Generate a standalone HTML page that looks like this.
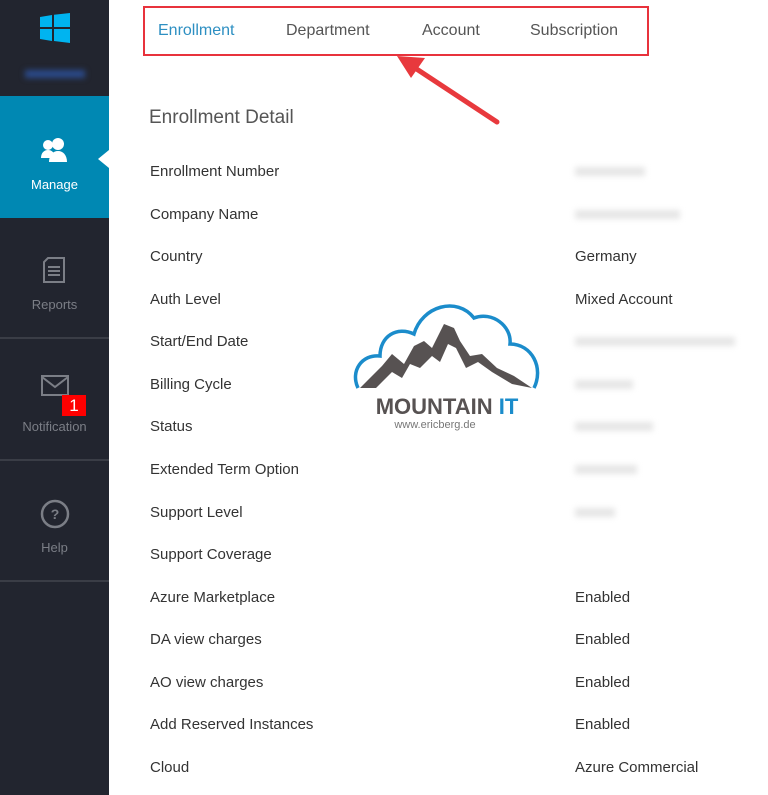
<!DOCTYPE html>
<html><head><meta charset="utf-8"><style>
body{margin:0;width:768px;height:795px;background:#fff;font-family:"Liberation Sans",sans-serif;position:relative;overflow:hidden}
.sb{position:absolute;left:0;top:0;width:109px;height:795px;background:#22252f}
.item{position:absolute;left:0;width:109px;text-align:center;font-size:13px;color:#7b7e86}
.div{position:absolute;left:0;width:109px;height:2px;background:#3a3d46}
.lbl{position:absolute;left:150px;font-size:15px;color:#333}
.val{position:absolute;left:575px;font-size:15px;color:#333}
.blur{position:absolute;left:575px;height:9px;background:#e6e6e6;filter:blur(3px)}
.tab{position:absolute;top:22px;font-size:16px;color:#555}
</style></head><body>
<div class="sb">
 <svg style="position:absolute;left:40px;top:13px" width="30" height="30" viewBox="0 0 30 30"><path fill="#00b4f0" d="M0 4l12-2v12H0zM14 1.7L30 0v14H14zM0 16h12v12L0 26zM14 16h16v14l-16-2z"/></svg>
 <div style="position:absolute;left:25px;top:70px;width:60px;height:8px;background:#2b4a8a;filter:blur(3px)"></div>
 <div style="position:absolute;top:96px;left:0;width:109px;height:122px;background:#0088b3"></div>
 <div style="position:absolute;left:98px;top:150px;width:0;height:0;border-top:9px solid transparent;border-bottom:9px solid transparent;border-right:11px solid #fff"></div>
 <svg style="position:absolute;left:40px;top:137px" width="28" height="26" viewBox="0 0 28 26"><circle cx="8" cy="8" r="5" fill="#fff"/><circle cx="18" cy="7" r="6" fill="#fff"/><path d="M1 21c0-5 3-8 7-8s7 3 7 8z" fill="#fff"/><path d="M9 25c0-7 4-11 9-11s9 4 9 11z" fill="#fff"/></svg>
 <div class="item" style="top:177px;color:#fff">Manage</div>
 <svg style="position:absolute;left:42px;top:256px" width="24" height="28" viewBox="0 0 24 28"><path d="M6 2h16v24H2V6z" fill="none" stroke="#7b7e86" stroke-width="2"/><path d="M6 11h12M6 15h12M6 19h12" stroke="#7b7e86" stroke-width="2"/></svg>
 <div class="item" style="top:297px">Reports</div>
 <div class="div" style="top:337px"></div>
 <svg style="position:absolute;left:41px;top:375px" width="28" height="22" viewBox="0 0 28 22"><rect x="1" y="1" width="26" height="19" fill="none" stroke="#7b7e86" stroke-width="2"/><path d="M1 2l13 10 13-10" fill="none" stroke="#7b7e86" stroke-width="2"/></svg>
 <div style="position:absolute;left:62px;top:395px;width:24px;height:21px;background:#f00;color:#fff;font-size:17px;text-align:center;line-height:21px">1</div>
 <div class="item" style="top:419px">Notification</div>
 <div class="div" style="top:459px"></div>
 <svg style="position:absolute;left:40px;top:499px" width="30" height="30" viewBox="0 0 30 30"><circle cx="15" cy="15" r="13" fill="none" stroke="#7b7e86" stroke-width="2.5"/><text x="15" y="20" text-anchor="middle" font-size="14" font-weight="bold" fill="#7b7e86" font-family="Liberation Sans">?</text></svg>
 <div class="item" style="top:540px">Help</div>
 <div class="div" style="top:580px"></div>
</div>
<div style="position:absolute;left:143px;top:6px;width:506px;height:50px;border:2px solid #e8323c;box-sizing:border-box"></div>
<div class="tab" style="left:158px;color:#2d8fc2">Enrollment</div>
<div class="tab" style="left:286px">Department</div>
<div class="tab" style="left:422px">Account</div>
<div class="tab" style="left:530px">Subscription</div>
<svg style="position:absolute;left:395px;top:52px" width="110" height="75"><path d="M102 70L14 12" stroke="#e8393d" stroke-width="5" stroke-linecap="round"/><path d="M2 4l28 2-14 20z" fill="#e8393d"/></svg>
<div style="position:absolute;left:149px;top:107px;font-size:19px;color:#555">Enrollment Detail</div>
<div class="lbl" style="top:163px">Enrollment Number</div><div class="blur" style="top:167px;width:70px"></div>
<div class="lbl" style="top:206px">Company Name</div><div class="blur" style="top:210px;width:105px"></div>
<div class="lbl" style="top:248px">Country</div><div class="val" style="top:248px">Germany</div>
<div class="lbl" style="top:291px">Auth Level</div><div class="val" style="top:291px">Mixed Account</div>
<div class="lbl" style="top:333px">Start/End Date</div><div class="blur" style="top:337px;width:160px"></div>
<div class="lbl" style="top:376px">Billing Cycle</div><div class="blur" style="top:380px;width:58px"></div>
<div class="lbl" style="top:418px">Status</div><div class="blur" style="top:422px;width:78px"></div>
<div class="lbl" style="top:461px">Extended Term Option</div><div class="blur" style="top:465px;width:62px"></div>
<div class="lbl" style="top:504px">Support Level</div><div class="blur" style="top:508px;width:40px"></div>
<div class="lbl" style="top:546px">Support Coverage</div>
<div class="lbl" style="top:589px">Azure Marketplace</div><div class="val" style="top:589px">Enabled</div>
<div class="lbl" style="top:631px">DA view charges</div><div class="val" style="top:631px">Enabled</div>
<div class="lbl" style="top:674px">AO view charges</div><div class="val" style="top:674px">Enabled</div>
<div class="lbl" style="top:716px">Add Reserved Instances</div><div class="val" style="top:716px">Enabled</div>
<div class="lbl" style="top:759px">Cloud</div><div class="val" style="top:759px">Azure Commercial</div>
<svg style="position:absolute;left:352px;top:296px" width="190" height="140" viewBox="0 0 190 140">
<path d="M6 92C-2 75 10 58 28 60C28 40 45 30 62 38C70 10 105 0 122 22C140 15 160 30 158 48C180 48 192 72 182 92" fill="none" stroke="#1b8ccb" stroke-width="3.5"/>
<path d="M8 92L30 70L40 58L52 68L62 50L72 45L80 52L92 28L102 32L108 45L118 60L130 58L145 72L162 80L180 92L160 88L140 76L126 66L114 72L104 52L96 48L88 66L80 60L68 72L58 68L50 82L40 76L24 92z" fill="#575252"/>
<text x="95" y="118" text-anchor="middle" font-family="Liberation Sans" font-weight="bold" font-size="22" fill="#575252">MOUNTAIN <tspan fill="#1b8ccb">IT</tspan></text>
<text x="83" y="132" text-anchor="middle" font-family="Liberation Sans" font-size="11" fill="#777">www.ericberg.de</text>
</svg>
</body></html>
